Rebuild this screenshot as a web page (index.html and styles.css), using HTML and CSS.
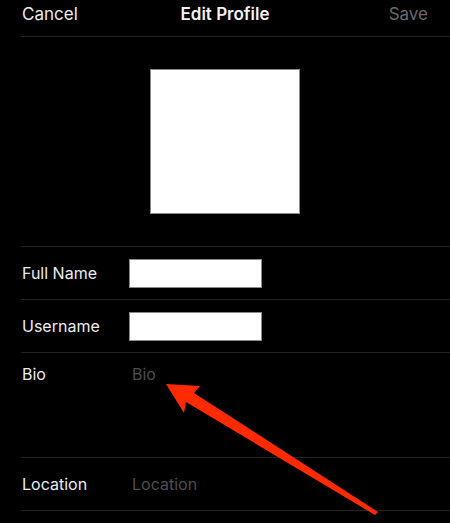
FILE: index.html
```html
<!DOCTYPE html>
<html lang="en">
<head>
    <meta charset="UTF-8">
    <meta name="viewport" content="width=device-width, initial-scale=1.0">
    <title>Edit Profile</title>
    <link rel="stylesheet" href="styles.css">
</head>
<body>
    <div class="screen">
        <div class="topbar">
            <span class="cancel">Cancel</span>
            <span class="title">Edit Profile</span>
            <span class="save">Save</span>
        </div>

        <div class="photo-wrap">
            <div class="photo"></div>
        </div>

        <div class="form">
            <div class="row">
                <span class="label">Full Name</span>
                <input class="box" type="text">
            </div>
            <div class="row">
                <span class="label">Username</span>
                <input class="box" type="text">
            </div>
            <div class="row bio">
                <span class="label">Bio</span>
                <span class="placeholder">Bio</span>
            </div>
            <div class="row">
                <span class="label">Location</span>
                <span class="placeholder">Location</span>
            </div>
        </div>

        <!-- annotation arrow over the form -->
        <svg class="arrow" width="450" height="523" viewBox="0 0 450 523">
            <polygon points="166,384 200,386 194,393 378,512 375,515 186,402 184,413" fill="#ff2a00"/>
        </svg>
    </div>
</body>
</html>
```

FILE: styles.css
```css
body {
    margin: 0;
    background: #000;
    font-family: "Inter", "Roboto", sans-serif;
    color: #ececec;
}
.screen {
    position: relative;
    width: 450px;
    height: 523px;
    overflow: hidden;
}
.topbar {
    display: grid;
    grid-template-columns: 1fr auto 1fr;
    align-items: center;
    height: 28px;
    padding: 0 22px 8px 1px;
    margin-left: 21px;
    border-bottom: 1px solid #232323;
    font-size: 17px;
}
.title {
    font-weight: 600;
    color: #f2f2f2;
}
.save {
    color: #6a6a6a;
    justify-self: end;
}
.photo-wrap {
    display: flex;
    justify-content: center;
    padding: 32px 0 32px;
}
.photo {
    width: 148px;
    height: 143px;
    background: #fff;
    border: 1px solid #8a8a8a;
}
.form {
    margin-left: 21px;
}
.row {
    display: flex;
    align-items: center;
    height: 52px;
    border-top: 1px solid #232323;
    font-size: 16px;
}
.row:last-child {
    border-bottom: 1px solid #232323;
}
.label {
    width: 107px;
    padding-left: 1px;
}
.box {
    width: 131px;
    height: 27px;
    margin: 0;
    padding: 0;
    border: 1px solid #8a8a8a;
    background: #fff;
}
.placeholder {
    padding-left: 3px;
    color: #4d4d4d;
}
.row.bio {
    align-items: flex-start;
    height: 104px;
}
.row.bio span {
    margin-top: 11px;
}
.arrow {
    position: absolute;
    left: 0;
    top: 0;
}
```
